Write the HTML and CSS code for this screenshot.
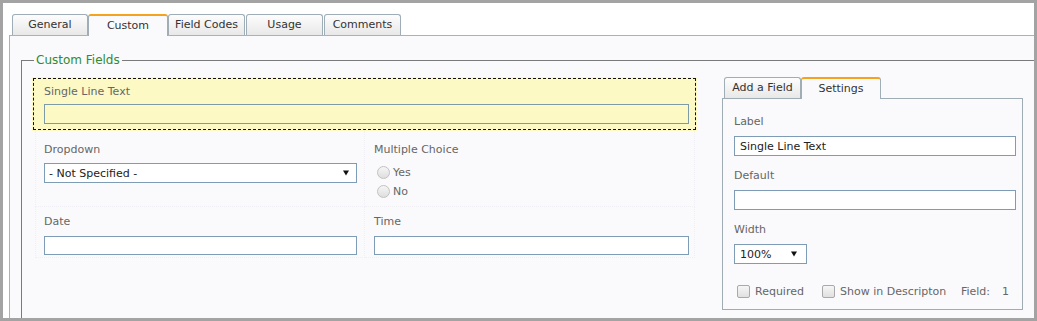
FILE: index.html
```html
<!DOCTYPE html>
<html>
<head>
<meta charset="utf-8">
<link rel="stylesheet" href="styles.css">
</head>
<body>
<div class="frame">
  <div class="tabs main-tabs">
    <div class="tab w76">General</div>
    <div class="tab active w80">Custom</div>
    <div class="tab w77">Field Codes</div>
    <div class="tab w77">Usage</div>
    <div class="tab w77">Comments</div>
  </div>
  <div class="panel">
    <fieldset class="custom-fields">
      <legend>Custom Fields</legend>
      <div class="fields-layout">
        <div class="form-area">
          <div class="field-selected">
            <div class="label">Single Line Text</div>
            <div class="input input-clear"></div>
          </div>
          <div class="grid">
            <div class="cell cell-left row1">
              <div class="label">Dropdown</div>
              <div class="input select">
                <span>- Not Specified -</span>
                <svg class="arrow" width="6" height="6" viewBox="0 0 6 6"><polygon points="0,0.5 6,0.5 3,5.5" fill="#111"/></svg>
              </div>
            </div>
            <div class="cell cell-right row1">
              <div class="label">Multiple Choice</div>
              <div class="radio-row"><span class="radio"></span><span class="opt">Yes</span></div>
              <div class="radio-row"><span class="radio"></span><span class="opt">No</span></div>
            </div>
            <div class="cell cell-left row2">
              <div class="label">Date</div>
              <div class="input short"></div>
            </div>
            <div class="cell cell-right row2">
              <div class="label">Time</div>
              <div class="input short"></div>
            </div>
          </div>
        </div>
        <div class="side">
          <div class="tabs side-tabs">
            <div class="tab w77">Add a Field</div>
            <div class="tab active w80">Settings</div>
          </div>
          <div class="side-panel">
            <div class="group">
              <div class="label">Label</div>
              <div class="input"><span class="value">Single Line Text</span></div>
            </div>
            <div class="group">
              <div class="label">Default</div>
              <div class="input"></div>
            </div>
            <div class="group">
              <div class="label">Width</div>
              <div class="input select width-select">
                <span class="value">100%</span>
                <svg class="arrow" width="6" height="6" viewBox="0 0 6 6"><polygon points="0,0.5 6,0.5 3,5.5" fill="#111"/></svg>
              </div>
            </div>
            <div class="checks">
              <span class="checkbox"></span><span class="check-label">Required</span>
              <span class="checkbox second"></span><span class="check-label">Show in Descripton</span>
              <span class="field-count">Field:<span class="num">1</span></span>
            </div>
          </div>
        </div>
      </div>
    </fieldset>
  </div>
</div>
</body>
</html>
```
FILE: styles.css
```css
body {
  margin: 0;
  background: #fff;
  font-family: "DejaVu Sans", Verdana, sans-serif;
  font-size: 11px;
  color: #333;
}

.frame {
  width: 1037px;
  height: 321px;
  box-sizing: border-box;
  border: 3px solid #a3a3a3;
  background: #fff;
  overflow: hidden;
  padding-top: 11px;
}

.tabs {
  display: flex;
  align-items: flex-end;
  gap: 1px;
  position: relative;
  z-index: 1;
  height: 21px;
}

.main-tabs {
  margin-left: 9px;
}

.tab {
  box-sizing: border-box;
  height: 21px;
  border: 1px solid #9eadb6;
  border-bottom: none;
  border-radius: 3px 3px 0 0;
  background: linear-gradient(#fdfdfd, #e8e8e8);
  color: #333;
  display: flex;
  align-items: center;
  justify-content: center;
  line-height: 14px;
  white-space: nowrap;
}

.tab.active {
  height: 22px;
  margin: 0 -1px -1px -1px;
  border-top: 2px solid #f5a21f;
  background: #fafafc;
  padding-bottom: 1px;
}

.w76 { width: 76px; }
.w77 { width: 77px; }
.w80 { width: 80px; }

.panel {
  margin-left: 6px;
  margin-right: -30px;
  height: 400px;
  border: 1px solid #a9b2b7;
  background: #fafafc;
  padding-left: 11px;
}

.custom-fields {
  margin: 17px 0 0 0;
  padding: 10px 0 0 10px;
  border: 1px solid #7a7a7a;
  min-width: 0;
  height: 340px;
}

.custom-fields legend {
  margin-left: 2px;
  padding: 0 2px;
  color: #2e8b32;
  font-size: 12px;
  line-height: 14px;
}

.fields-layout {
  display: flex;
  gap: 25px;
  align-items: flex-start;
}

.form-area {
  width: 665px;
  flex: none;
}

.label {
  color: #666;
  line-height: 14px;
  margin-bottom: 6px;
  white-space: nowrap;
}

.input {
  box-sizing: border-box;
  height: 20px;
  border: 1px solid #7f9cb6;
  background: #fff;
  display: flex;
  align-items: center;
  padding-left: 5px;
  color: #222;
}

.field-selected {
  height: 54px;
  box-sizing: border-box;
  padding: 7px 8px 7px 12px;
  background: #fcf9c5;
  outline: 1px dashed #111;
  outline-offset: -2px;
}

.field-selected .label {
  line-height: 16px;
  margin-bottom: 4px;
}

.input-clear {
  background: transparent;
  border-color: #7d9ba6;
}

.grid {
  display: grid;
  grid-template-columns: 330px 330px;
  margin: 0 2px 0 3px;
}

.cell {
  box-sizing: border-box;
  border-right: 1px dotted #f0f0f4;
  border-bottom: 1px dotted #f0f0f4;
}

.cell-left {
  border-left: 1px dotted #f0f0f4;
  padding: 0 7px 0 8px;
}

.cell-right {
  padding: 0 5px 0 9px;
}

.row1 {
  padding-top: 12px;
  height: 76px;
}

.row2 {
  padding-top: 8px;
  height: 51px;
}

.row2 .label {
  margin-bottom: 7px;
}

.input.short {
  height: 19px;
}

.select {
  padding-left: 4px;
  justify-content: space-between;
  padding-right: 7px;
}

.arrow {
  display: block;
}

.radio-row {
  display: flex;
  align-items: center;
  height: 19px;
  padding-left: 3px;
}

.radio {
  width: 11px;
  height: 11px;
  border: 1px solid #c2c2c2;
  border-radius: 50%;
  background: linear-gradient(#f6f6f6, #dedede);
  margin-right: 3px;
  flex: none;
}

.opt {
  color: #666;
}

.side {
  width: 301px;
  flex: none;
}

.side-tabs {
  margin-left: 2px;
}

.side-panel {
  box-sizing: border-box;
  height: 212px;
  border: 1px solid #a0acb3;
  background: #fafafc;
  padding: 16px 6px 10px 11px;
}

.side-panel .label {
  margin-bottom: 7px;
}

.side-panel .group {
  margin-bottom: 13px;
}

.width-select {
  width: 73px;
  padding-left: 5px;
  padding-right: 9px;
}

.checks {
  display: flex;
  align-items: center;
  height: 14px;
  margin-top: 20px;
  color: #666;
}

.checkbox {
  width: 11px;
  height: 11px;
  border: 1px solid #a9a9a9;
  border-radius: 2px;
  background: linear-gradient(#f6f6f6, #e0e0e0);
  margin-left: 3px;
  margin-right: 5px;
  flex: none;
}

.checkbox.second {
  margin-left: 18px;
}

.field-count {
  margin-left: auto;
  margin-right: 7px;
}

.field-count .num {
  margin-left: 12px;
}
```
